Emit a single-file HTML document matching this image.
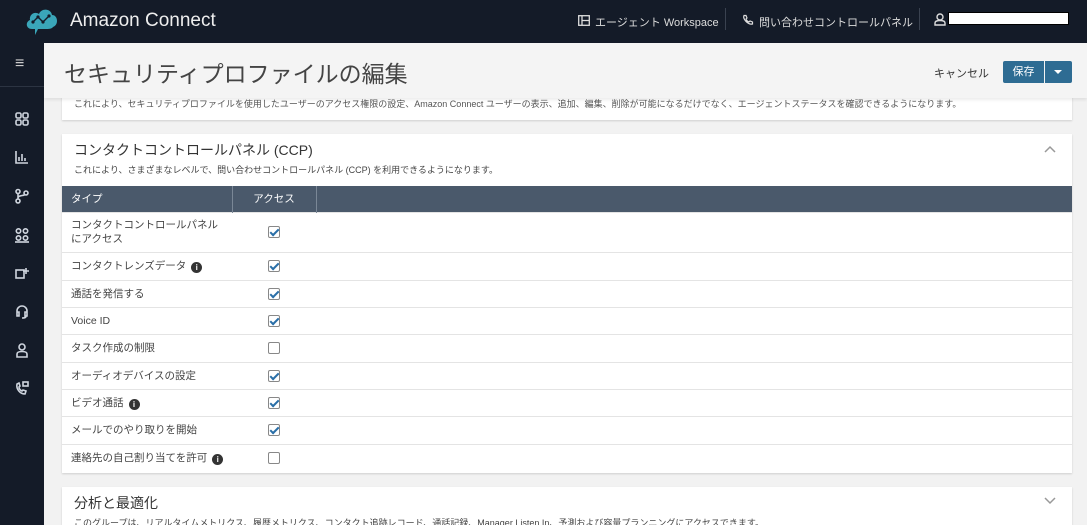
<!DOCTYPE html>
<html style="width:1087px;height:525px;overflow:hidden"><head><meta charset="utf-8"><style>
*{box-sizing:border-box;margin:0;padding:0}
body{width:1087px;height:525px;overflow:hidden;background:#f2f2f2;font-family:"Liberation Sans","Noto Sans CJK JP",sans-serif;color:#333;position:relative}
.top{position:absolute;left:0;top:0;width:1087px;height:43px;background:#141b28;color:#fff}
.side{position:absolute;left:0;top:43px;width:44px;height:482px;background:#141b28}
.hdr{position:absolute;left:44px;top:43px;width:1043px;height:55px;background:#f4f4f4;box-shadow:0 2px 3px rgba(0,0,0,.08);z-index:2}
.card{position:absolute;left:62px;width:1010px;background:#fff;box-shadow:0 1px 2px rgba(0,0,0,.15)}
.ico{position:absolute;left:14px;width:16px;height:16px;stroke:#cfd5de;fill:none;stroke-width:1.6}
table{border-collapse:collapse;width:1010px;font-size:10.5px;table-layout:fixed}
th{background:#4a596b;color:#fff;font-weight:normal;text-align:left;height:26px;padding:0 9px;border-right:1px solid #7a8796}
td{border-top:1px solid #e4e4e4;padding:0 9px;color:#444;vertical-align:middle;white-space:nowrap;line-height:14px}
.cb{display:inline-block;width:12px;height:12px;border:1px solid #888;border-radius:2px;position:relative;vertical-align:middle}
.cb.on::after{content:"";position:absolute;left:3px;top:0px;width:3px;height:7px;border:solid #2a6fa8;border-width:0 2px 2px 0;transform:rotate(45deg)}
.i{display:inline-block;width:11px;height:11px;border-radius:50%;background:#333;color:#fff;font-size:8px;font-weight:bold;text-align:center;line-height:11px;margin-left:5px;vertical-align:-1px}
</style></head><body>
<div class="top">
 <svg style="position:absolute;left:24px;top:5px" width="36" height="32" viewBox="0 0 36 32"><path d="M8 24 C2 24 1 17 6 15 C5 9 11 6 15 9 C17 3 27 3 28 10 C34 10 35 20 29 22 C28 24 24 24 22 24 L14 24 L11 30 L11 24 Z" fill="#3aa6b9"/><path d="M9 17 L14 12 L19 17 L25 11" stroke="#141b28" stroke-width="1.4" fill="none"/><circle cx="9" cy="17" r="1.6" fill="#141b28"/><circle cx="14" cy="12" r="1.6" fill="#141b28"/><circle cx="19" cy="17" r="1.6" fill="#141b28"/><circle cx="25" cy="11" r="1.6" fill="#141b28"/></svg>
 <div style="position:absolute;left:70px;top:10px;font-size:19px;color:#eee">Amazon Connect</div>
 <svg style="position:absolute;left:578px;top:15px" width="12" height="11" viewBox="0 0 12 11"><rect x="0.7" y="0.7" width="10.6" height="9.6" stroke="#ddd" fill="none" stroke-width="1.3"/><path d="M4 1 V10 M4 5.5 H11" stroke="#ddd" stroke-width="1.3"/></svg>
 <div style="position:absolute;left:595px;top:14px;font-size:11px;color:#ddd">エージェント Workspace</div>
 <div style="position:absolute;left:725px;top:8px;width:1px;height:22px;background:#3a4250"></div>
 <svg style="position:absolute;left:742px;top:14px" width="12" height="12" viewBox="0 0 12 12"><path d="M2 1.5 C0.5 5 6 11 10.5 10 L10.5 8 L8 7 L7 8 C5.5 7.5 4.5 6.5 4 5 L5 4 L4 1.5 Z" stroke="#ddd" fill="none" stroke-width="1.2"/></svg>
 <div style="position:absolute;left:759px;top:14px;font-size:11px;color:#ddd">問い合わせコントロールパネル</div>
 <div style="position:absolute;left:919px;top:8px;width:1px;height:22px;background:#3a4250"></div>
 <svg style="position:absolute;left:934px;top:13px" width="12" height="13" viewBox="0 0 12 13"><circle cx="6" cy="4" r="3" stroke="#ddd" fill="none" stroke-width="1.4"/><path d="M1 12 V10 C1 8 3 7.5 6 7.5 C9 7.5 11 8 11 10 V12 Z" stroke="#ddd" fill="none" stroke-width="1.4"/></svg>
 <div style="position:absolute;left:948px;top:12px;width:121px;height:13px;background:#fff;border:1px solid #000"></div>
</div>
<div class="side">
 <div style="position:absolute;left:15px;top:12px;color:#ccc;font-size:16px">&#8801;</div>
 <div style="position:absolute;left:0;top:43px;width:44px;height:1px;background:#2c3442"></div>
 <svg class="ico" style="top:68px" viewBox="0 0 16 16"><rect x="2" y="2" width="5" height="5" rx="1.5"/><rect x="9" y="2" width="5" height="5" rx="1.5"/><rect x="2" y="9" width="5" height="5" rx="1.5"/><rect x="9" y="9" width="5" height="5" rx="1.5"/></svg>
 <svg class="ico" style="top:106px" viewBox="0 0 16 16"><path d="M2 2 V14 H14 M5 12 V8 M8 12 V5 M11 12 V9"/></svg>
 <svg class="ico" style="top:145px" viewBox="0 0 16 16"><circle cx="4" cy="3.5" r="2"/><circle cx="12" cy="5" r="2"/><circle cx="4" cy="13" r="2"/><path d="M4 5.5 V11 M4 10 C4 7 10 8 11 6.5"/></svg>
 <svg class="ico" style="top:184px" viewBox="0 0 16 16"><circle cx="4.5" cy="4" r="2.2"/><circle cx="11.5" cy="4" r="2.2"/><circle cx="4.5" cy="11" r="2.2"/><circle cx="11.5" cy="11" r="2.2"/><path d="M1 15 H15"/></svg>
 <svg class="ico" style="top:222px" viewBox="0 0 16 16"><rect x="2" y="5" width="8" height="8"/><path d="M12 3 V9 M9 6 H15"/></svg>
 <svg class="ico" style="top:260px" viewBox="0 0 16 16"><path d="M3 11 V8 A5 5 0 0 1 13 8 V11 M3 9 H5 V13 H3 Z M11 9 H13 V13 H11 Z M12 13 C12 15 10 15 8 15"/></svg>
 <svg class="ico" style="top:299px" viewBox="0 0 16 16"><circle cx="8" cy="5" r="3"/><path d="M3 15 V12 C3 10 5 9.5 8 9.5 C11 9.5 13 10 13 12 V15 Z"/></svg>
 <svg class="ico" style="top:337px" viewBox="0 0 16 16"><path d="M3 4 C2 9 6 14 11 14 L12 11 L9 10 L8 11 C6 10 5 9 5 7 L6 6 L5 3 Z"/><rect x="9" y="2" width="5" height="4"/></svg>
</div>
<div class="hdr">
 <div style="position:absolute;left:20px;top:12px;font-size:23px;color:#444">セキュリティプロファイルの編集</div>
 <div style="position:absolute;left:890px;top:22px;font-size:11px;color:#333">キャンセル</div>
 <div style="position:absolute;left:959px;top:18px;width:41px;height:22px;background:#2e6c93;border-radius:2px 0 0 2px;color:#fff;font-size:11px;text-align:center;line-height:22px">保存</div>
 <div style="position:absolute;left:1001px;top:18px;width:27px;height:22px;background:#2e6c93;border-radius:0 2px 2px 0"><div style="position:absolute;left:9px;top:9px;border:4px solid transparent;border-top:4px solid #fff"></div></div>
</div>
<div class="card" style="top:70px;height:50px">
 <div style="position:absolute;left:12px;top:27px;font-size:9px;color:#555;white-space:nowrap">これにより、セキュリティプロファイルを使用したユーザーのアクセス権限の設定、Amazon Connect ユーザーの表示、追加、編集、削除が可能になるだけでなく、エージェントステータスを確認できるようになります。</div>
</div>
<div class="card" style="top:134px;height:339px;overflow:hidden">
 <div style="position:absolute;left:12px;top:6px;font-size:14px;color:#333">コンタクトコントロールパネル (CCP)</div>
 <div style="position:absolute;left:12px;top:29px;font-size:9px;color:#444">これにより、さまざまなレベルで、問い合わせコントロールパネル (CCP) を利用できるようになります。</div>
 <svg style="position:absolute;left:982px;top:11px" width="12" height="8" viewBox="0 0 12 8"><path d="M1 7 L6 2 L11 7" stroke="#999" stroke-width="1.5" fill="none"/></svg>
 <table style="position:absolute;top:52px;left:0">
  <colgroup><col style="width:170px"><col style="width:84px"><col></colgroup>
  <tr><th>タイプ</th><th style="text-align:center">アクセス</th><th style="border-right:none"></th></tr>
  <tr style="height:40px"><td>コンタクトコントロールパネル<br>にアクセス</td><td style="text-align:center"><span class="cb on"></span></td><td></td></tr>
  <tr style="height:28px"><td>コンタクトレンズデータ<span class="i">i</span></td><td style="text-align:center"><span class="cb on"></span></td><td></td></tr>
  <tr style="height:27px"><td>通話を発信する</td><td style="text-align:center"><span class="cb on"></span></td><td></td></tr>
  <tr style="height:27px"><td>Voice ID</td><td style="text-align:center"><span class="cb on"></span></td><td></td></tr>
  <tr style="height:28px"><td>タスク作成の制限</td><td style="text-align:center"><span class="cb"></span></td><td></td></tr>
  <tr style="height:27px"><td>オーディオデバイスの設定</td><td style="text-align:center"><span class="cb on"></span></td><td></td></tr>
  <tr style="height:27px"><td>ビデオ通話<span class="i">i</span></td><td style="text-align:center"><span class="cb on"></span></td><td></td></tr>
  <tr style="height:28px"><td>メールでのやり取りを開始</td><td style="text-align:center"><span class="cb on"></span></td><td></td></tr>
  <tr style="height:28px"><td>連絡先の自己割り当てを許可<span class="i">i</span></td><td style="text-align:center"><span class="cb"></span></td><td></td></tr>
 </table>
</div>
<div class="card" style="top:487px;height:38px;overflow:hidden">
 <div style="position:absolute;left:12px;top:6px;font-size:14px;color:#333">分析と最適化</div>
 <svg style="position:absolute;left:982px;top:10px" width="12" height="8" viewBox="0 0 12 8"><path d="M1 1 L6 6 L11 1" stroke="#999" stroke-width="1.5" fill="none"/></svg>
 <div style="position:absolute;left:12px;top:29px;font-size:9px;color:#444;white-space:nowrap">このグループは、リアルタイムメトリクス、履歴メトリクス、コンタクト追跡レコード、通話記録、Manager Listen In、予測および容量プランニングにアクセスできます。</div>
</div>
</body></html>
